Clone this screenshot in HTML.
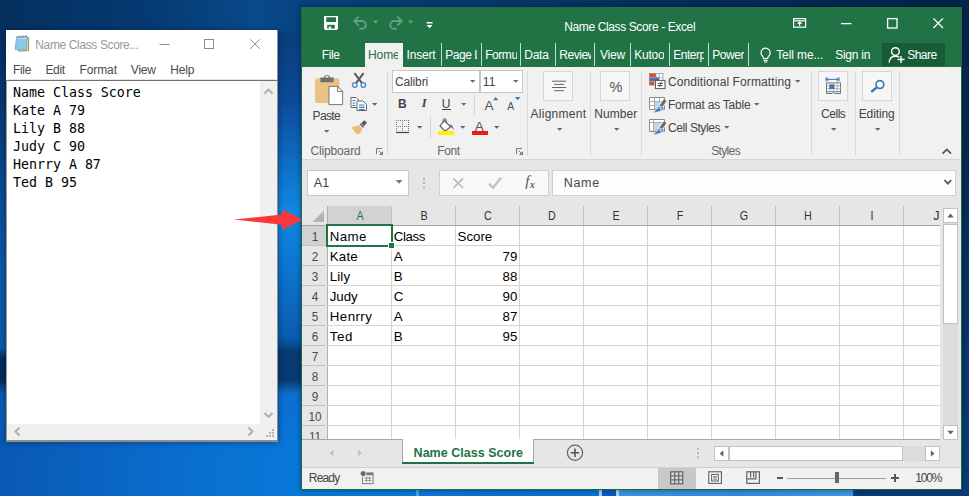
<!DOCTYPE html>
<html lang="en"><head><meta charset="utf-8"><title>Name Class Score</title>
<style>
html,body{margin:0;padding:0}
body{width:969px;height:496px;overflow:hidden;position:relative;background:#0b63c5;font-family:"Liberation Sans",sans-serif}
.r{position:absolute;box-sizing:border-box;display:block}
.t{position:absolute;white-space:pre;line-height:1;font-family:"Liberation Sans",sans-serif}
.m{position:absolute;white-space:pre;line-height:1;font-family:"DejaVu Sans Mono","Liberation Mono",monospace}
</style></head><body>
<!-- desktop -->
<div class="r" style="left:0px;top:0px;width:969px;height:496px;background:linear-gradient(180deg,#07407c 0px,#093f7c 40px,#0c4a98 100px,#0e6cc4 160px,#1088e0 210px,#0d78d4 260px,#0a5cae 338px,#063a70 352px,#063a70 380px,#0b70d0 394px,#0a74d6 440px,#0a74d6 496px);"></div>
<div class="r" style="left:0px;top:0px;width:969px;height:32px;background:linear-gradient(90deg,#04305f 0px,#053a72 150px,#094a8a 260px,#07407c 310px,#063868 500px,#052c58 700px,#042448 969px);"></div>
<div class="r" style="left:0px;top:30px;width:7px;height:466px;background:linear-gradient(180deg,#04305f 0px,#07386c 70px,#0a4a90 150px,#0b58a8 230px,#0b5aaa 318px,#052c58 328px,#052c58 350px,#0a5cb2 364px,#0959b4 466px);"></div>
<div class="r" style="left:0px;top:440px;width:969px;height:56px;background:linear-gradient(90deg,#0959b4 0px,#0a64c2 100px,#0a70d0 200px,#0878d8 290px,#0a72d4 500px,#0a6acc 840px,#0a3a76 856px,#0a3c7a 969px);"></div>
<div class="r" style="left:961px;top:0px;width:8px;height:496px;background:linear-gradient(180deg,#07244a 0px,#082b58 200px,#0a3670 380px,#0a3c7a 496px);"></div>
<div class="r" style="left:599px;top:489px;width:3px;height:7px;background:#9ccdf2;"></div>
<div class="r" style="left:602px;top:489px;width:14px;height:7px;background:#0a58b8;"></div>
<div class="r" style="left:616px;top:489px;width:3px;height:7px;background:#a8d4f4;"></div>
<div class="r" style="left:619px;top:489px;width:234px;height:7px;background:linear-gradient(90deg,#3a94e0,#2f8cdc 120px,#3a98e4 234px);"></div>
<div class="r" style="left:416px;top:489px;width:3px;height:7px;background:#4aa0e8;"></div>
<!-- notepad window -->
<div class="r" style="left:5px;top:29px;width:274px;height:413px;background:rgba(10,30,70,.28);box-shadow:0 1px 6px rgba(0,10,40,.35);"></div>
<div class="r" style="left:6px;top:30px;width:272px;height:412px;background:#8e8e8e;"></div>
<div class="r" style="left:6px;top:30px;width:271px;height:410px;background:#ffffff;"></div>
<svg class="r" style="left:14px;top:35px" width="17" height="18" viewBox="0 0 17 18">
<path d="M3.2 3.2 L14.6 2.6 L14.6 15.6 L4.6 16.2 Z" fill="#e4d898" stroke="#8c7c3c" stroke-width=".8"/>
<path d="M2.6 2.4 L13.2 1.8 L12.4 14.2 L1 14.6 Z" fill="#b6def4" stroke="#5aa4d0" stroke-width=".8"/>
<path d="M2.4 5h10.4M2.2 7h10.4M2 9h10.4M1.8 11h10.4M1.6 13h10.4" stroke="#6aaed8" stroke-width="1"/>
<path d="M3.2 2.6v-1.6M4.8 2.5v-1.6M6.4 2.4v-1.6M8 2.3v-1.6M9.6 2.2v-1.6M11.2 2.1v-1.6M12.6 2v-1.6" stroke="#555" stroke-width=".7"/>
</svg>
<span class="t" style="left:35.30px;top:39.44px;font-size:12px;color:#999;letter-spacing:-0.370px;">Name Class Score...</span>
<svg class="r" style="left:150px;top:30px" width="128" height="29" viewBox="0 0 128 29">
<path d="M9.5 14.5h10" stroke="#8c8c8c" stroke-width="1" fill="none"/>
<rect x="54.5" y="9.5" width="9" height="9" stroke="#8c8c8c" stroke-width="1" fill="none"/>
<path d="M100.3 9.3l9.6 9.6M109.9 9.3l-9.6 9.6" stroke="#8c8c8c" stroke-width="1" fill="none"/>
</svg>
<span class="t" style="left:13.00px;top:64.44px;font-size:12px;color:#4a4a4a;letter-spacing:-0.334px;">File</span>
<span class="t" style="left:45.40px;top:64.44px;font-size:12px;color:#4a4a4a;letter-spacing:-0.294px;">Edit</span>
<span class="t" style="left:79.40px;top:64.44px;font-size:12px;color:#4a4a4a;letter-spacing:-0.084px;">Format</span>
<span class="t" style="left:130.80px;top:64.44px;font-size:12px;color:#4a4a4a;letter-spacing:-0.198px;">View</span>
<span class="t" style="left:170.20px;top:64.44px;font-size:12px;color:#4a4a4a;letter-spacing:-0.170px;">Help</span>
<div class="r" style="left:7px;top:79px;width:270px;height:1px;background:#e4e4e4;"></div>
<div class="r" style="left:7px;top:80px;width:270px;height:1px;background:#707070;"></div>
<div class="r" style="left:6px;top:80px;width:1px;height:361px;background:#9a9a9a;"></div>
<div class="r" style="left:260px;top:81px;width:17px;height:343px;background:#f0f0f0;"></div>
<div class="r" style="left:7px;top:424px;width:270px;height:16px;background:#f0f0f0;"></div>
<svg class="r" style="left:260px;top:81px" width="17" height="343" viewBox="0 0 17 343">
<path d="M4.5 12.5l4-4 4 4" stroke="#adadad" stroke-width="1.9" fill="none"/>
<path d="M4.5 332l4 4 4-4" stroke="#adadad" stroke-width="1.9" fill="none"/>
</svg>
<svg class="r" style="left:7px;top:424px" width="270" height="16" viewBox="0 0 270 16">
<path d="M12.5 3.5l-4 4 4 4" stroke="#adadad" stroke-width="1.9" fill="none"/>
<path d="M241.5 3.5l4 4-4 4" stroke="#adadad" stroke-width="1.9" fill="none"/>
<g fill="#b4b4b4"><rect x="265" y="8" width="2" height="2"/><rect x="265" y="11" width="2" height="2"/><rect x="262" y="11" width="2" height="2"/><rect x="259" y="11" width="2" height="2"/><rect x="262" y="8" width="2" height="2"/><rect x="265" y="5" width="2" height="2"/></g>
</svg>
<span class="m" style="left:12.90px;top:85.74px;font-size:13.3px;color:#000;letter-spacing:-0.007px;">Name Class Score</span>
<span class="m" style="left:12.90px;top:103.74px;font-size:13.3px;color:#000;letter-spacing:-0.007px;">Kate A 79</span>
<span class="m" style="left:12.90px;top:121.74px;font-size:13.3px;color:#000;letter-spacing:-0.007px;">Lily B 88</span>
<span class="m" style="left:12.90px;top:139.74px;font-size:13.3px;color:#000;letter-spacing:-0.007px;">Judy C 90</span>
<span class="m" style="left:12.90px;top:157.74px;font-size:13.3px;color:#000;letter-spacing:-0.007px;">Henrry A 87</span>
<span class="m" style="left:12.90px;top:175.74px;font-size:13.3px;color:#000;letter-spacing:-0.007px;">Ted B 95</span>
<!-- excel window -->
<div class="r" style="left:301px;top:7px;width:661px;height:483px;background:#1e6a40;box-shadow:0 0 5px rgba(0,8,30,.45);"></div>
<div class="r" style="left:302px;top:7px;width:659px;height:60px;background:#217346;"></div>
<div class="r" style="left:302px;top:67px;width:659px;height:92px;background:#f1f1f1;"></div>
<div class="r" style="left:302px;top:159px;width:659px;height:1px;background:#d6d6d6;"></div>
<div class="r" style="left:302px;top:160px;width:659px;height:307px;background:#e6e6e6;"></div>
<svg class="r" style="left:320px;top:12px" width="120" height="22" viewBox="0 0 120 22">
<path d="M4 4h14v12.8l-1.2 1.2H5.2L4 16.8z" fill="#fff"/>
<path d="M6.2 5.3h9.9V10H6.2z" fill="#217346"/>
<path d="M7.2 12.8h7.6v3.8H7.2z" fill="#217346"/>
<path d="M8.7 14.6h2.5v2H8.7z" fill="#fff"/>
<g stroke="#5fa17e" stroke-width="2" fill="none" stroke-linecap="butt">
<path d="M34.4 9.1h7.6a3.8 3.8 0 0 1 0 7.6h-2.6"/>
<path d="M38.8 4.6l-4.6 4.5 4.6 4.5"/>
<path d="M81.6 9.1h-7.6a3.8 3.8 0 0 0 0 7.6h2.6"/>
<path d="M77.2 4.6l4.6 4.5-4.6 4.5"/>
</g>
<path d="M53 8.6h5.4l-2.7 3.2z" fill="#5fa17e"/>
<path d="M88 8.6h5.4l-2.7 3.2z" fill="#5fa17e"/>
<path d="M106.6 10h6v1.6h-6zM106.6 13h6l-3 3.2z" fill="#fff"/>
</svg>
<span class="t" style="left:564.20px;top:21.44px;font-size:12px;color:#fff;letter-spacing:-0.377px;">Name Class Score - Excel</span>
<svg class="r" style="left:790px;top:12px" width="160" height="22" viewBox="0 0 160 22">
<g stroke="#fff" fill="none" stroke-width="1.2">
<rect x="3.6" y="6.6" width="12" height="8.6"/>
<path d="M3.6 8.8h12"/>
<path d="M9.6 14v-4M7.6 11.8l2-2 2 2"/>
<path d="M51 11.6h10.4" stroke-width="1.3"/>
<rect x="97.6" y="6.6" width="9.4" height="9.4" stroke-width="1.3"/>
<path d="M143.4 6.4l9.6 9.6M153 6.4l-9.6 9.6" stroke-width="1.3"/>
</g>
</svg>
<div class="r" style="left:365px;top:43px;width:38px;height:25px;background:#f1f1f1;"></div>
<span class="t" style="left:321.70px;top:49.34px;font-size:12px;color:#fff;letter-spacing:-0.334px;">File</span>
<div class="r" style="left:368.00px;top:47.34px;width:29.8px;height:17px;overflow:hidden"><span class="t" style="left:0;top:2px;font-size:12px;color:#217346;letter-spacing:-0.1px;">Home</span></div>
<span class="t" style="left:406.50px;top:49.34px;font-size:12px;color:#fff;letter-spacing:-0.169px;">Insert</span>
<div class="r" style="left:445.20px;top:47.34px;width:32px;height:17px;overflow:hidden"><span class="t" style="left:0;top:2px;font-size:12px;color:#fff;letter-spacing:-0.45px;">Page Layout</span></div>
<div class="r" style="left:485.20px;top:47.34px;width:31.5px;height:17px;overflow:hidden"><span class="t" style="left:0;top:2px;font-size:12px;color:#fff;letter-spacing:-0.45px;">Formulas</span></div>
<span class="t" style="left:524.20px;top:49.34px;font-size:12px;color:#fff;letter-spacing:-0.212px;">Data</span>
<div class="r" style="left:559.20px;top:47.34px;width:31.5px;height:17px;overflow:hidden"><span class="t" style="left:0;top:2px;font-size:12px;color:#fff;letter-spacing:-0.45px;">Review</span></div>
<span class="t" style="left:600.00px;top:49.34px;font-size:12px;color:#fff;letter-spacing:-0.198px;">View</span>
<div class="r" style="left:634.20px;top:47.34px;width:30px;height:17px;overflow:hidden"><span class="t" style="left:0;top:2px;font-size:12px;color:#fff;letter-spacing:-0.2px;">Kutools &#8482;</span></div>
<div class="r" style="left:673.20px;top:47.34px;width:31px;height:17px;overflow:hidden"><span class="t" style="left:0;top:2px;font-size:12px;color:#fff;letter-spacing:-0.45px;">Enterprise</span></div>
<div class="r" style="left:712.20px;top:47.34px;width:32px;height:17px;overflow:hidden"><span class="t" style="left:0;top:2px;font-size:12px;color:#fff;letter-spacing:-0.45px;">Power Pivot</span></div>
<div class="r" style="left:441px;top:43px;width:1px;height:23px;background:rgba(255,255,255,.75);"></div>
<div class="r" style="left:481px;top:43px;width:1px;height:23px;background:rgba(255,255,255,.75);"></div>
<div class="r" style="left:520px;top:43px;width:1px;height:23px;background:rgba(255,255,255,.75);"></div>
<div class="r" style="left:555px;top:43px;width:1px;height:23px;background:rgba(255,255,255,.75);"></div>
<div class="r" style="left:594px;top:43px;width:1px;height:23px;background:rgba(255,255,255,.75);"></div>
<div class="r" style="left:630px;top:43px;width:1px;height:23px;background:rgba(255,255,255,.75);"></div>
<div class="r" style="left:669px;top:43px;width:1px;height:23px;background:rgba(255,255,255,.75);"></div>
<div class="r" style="left:708px;top:43px;width:1px;height:23px;background:rgba(255,255,255,.75);"></div>
<div class="r" style="left:748px;top:43px;width:1px;height:23px;background:rgba(255,255,255,.75);"></div>
<svg class="r" style="left:758px;top:45px" width="16" height="18" viewBox="0 0 16 18">
<path d="M4.6 11.2a4.6 4.6 0 1 1 6 0c-.7.7-.9 1.3-.9 2.3H5.5c0-1-.2-1.6-.9-2.3z" fill="none" stroke="#fff" stroke-width="1.2"/>
<path d="M5.6 15.4h4M6 17h3.2" stroke="#fff" stroke-width="1.1"/>
</svg>
<span class="t" style="left:776.20px;top:49.34px;font-size:12px;color:#fff;letter-spacing:-0.101px;">Tell me...</span>
<span class="t" style="left:835.20px;top:49.34px;font-size:12px;color:#fff;letter-spacing:-0.242px;">Sign in</span>
<div class="r" style="left:882px;top:43px;width:63px;height:23px;background:#185c37;"></div>
<svg class="r" style="left:887px;top:45px" width="20" height="20" viewBox="0 0 20 20">
<circle cx="8.4" cy="6.6" r="3.9" fill="none" stroke="#fff" stroke-width="1.4"/>
<path d="M2 17.5c.4-4.2 2.6-6.3 6.4-6.3 1.6 0 2.8.3 3.8.9" fill="none" stroke="#fff" stroke-width="1.4"/>
<path d="M14 11v7M10.5 14.5h7" stroke="#fff" stroke-width="1.4"/>
</svg>
<span class="t" style="left:907.20px;top:49.34px;font-size:12px;color:#fff;letter-spacing:-0.504px;">Share</span>
<div class="r" style="left:387px;top:71px;width:1px;height:85px;background:#dadada;"></div>
<div class="r" style="left:527px;top:71px;width:1px;height:85px;background:#dadada;"></div>
<div class="r" style="left:590px;top:71px;width:1px;height:85px;background:#dadada;"></div>
<div class="r" style="left:641px;top:71px;width:1px;height:85px;background:#dadada;"></div>
<div class="r" style="left:811px;top:71px;width:1px;height:85px;background:#dadada;"></div>
<div class="r" style="left:855px;top:71px;width:1px;height:85px;background:#dadada;"></div>
<div class="r" style="left:899px;top:71px;width:1px;height:85px;background:#dadada;"></div>
<svg class="r" style="left:312px;top:72px" width="36" height="36" viewBox="0 0 36 36">
<rect x="3" y="6.2" width="24.4" height="24.8" rx="2" fill="#eac282"/>
<path d="M8.4 10.2V5.6h3.4a3.3 3.3 0 0 1 6.4 0h3.4v4.6z" fill="#6e6e6e"/>
<rect x="13.5" y="3.8" width="3" height="1.8" fill="#f1f1f1"/>
<path d="M17 14.4h8.6l5 5V32.6H17z" fill="#fff" stroke="#777" stroke-width="1"/>
<path d="M25.6 14.4v5h5" fill="none" stroke="#777" stroke-width="1"/>
</svg>
<span class="t" style="left:312.50px;top:110.34px;font-size:12px;color:#444;letter-spacing:-0.617px;">Paste</span>
<svg class="r" style="left:323.6px;top:130.4px" width="8" height="5" viewBox="0 0 8 5"><path d="M0 0h5.4l-2.7 2.8z" fill="#666"/></svg>
<svg class="r" style="left:350px;top:72px" width="18" height="17" viewBox="0 0 18 17">
<path d="M4.4 1.2l8 10.4M13.6 1.2l-8 10.4" stroke="#5a5a5a" stroke-width="2" fill="none"/>
<circle cx="4.7" cy="13" r="2.3" fill="#f1f1f1" stroke="#4583c2" stroke-width="1.3"/>
<circle cx="13.3" cy="13" r="2.3" fill="#f1f1f1" stroke="#4583c2" stroke-width="1.3"/>
</svg>
<svg class="r" style="left:349px;top:96px" width="20" height="16" viewBox="0 0 20 16">
<path d="M2 1.5h5l2.5 2.5v7.5H2z" fill="#fff" stroke="#6a6a6a" stroke-width="1"/>
<path d="M3.4 4.5h3M3.4 7h3M3.4 9.5h3" stroke="#3b78b8" stroke-width="1.1"/>
<path d="M8 5h6l3.5 3.5v6H8z" fill="#fff" stroke="#6a6a6a" stroke-width="1"/>
<path d="M10 9h5.6M10 11.4h5.6M10 13.6h5.6" stroke="#3b78b8" stroke-width="1.1"/>
</svg>
<svg class="r" style="left:372.4px;top:103.3px" width="8" height="5" viewBox="0 0 8 5"><path d="M0 0h5.4l-2.7 2.8z" fill="#666"/></svg>
<svg class="r" style="left:350px;top:119px" width="19" height="16" viewBox="0 0 19 16">
<path d="M11.2 4.2l3.2-3 2.6 2.6-3 3.2z" fill="#555"/>
<path d="M9.4 5.4l1.6-1.4 3.4 3.4-1.4 1.6z" fill="#777"/>
<path d="M8.8 6.2l3.6 3.6-2.4 5H6L1.4 8.2z" fill="#e8bd7a"/>
</svg>
<span class="t" style="left:310.50px;top:145.34px;font-size:12px;color:#666;letter-spacing:-0.152px;">Clipboard</span>
<svg class="r" style="left:376px;top:148px" width="8" height="8" viewBox="0 0 8 8"><path d="M.5 6V.5H6" fill="none" stroke="#777" stroke-width="1"/><path d="M2.6 2.6l3.6 3.6" stroke="#777" stroke-width="1"/><path d="M7 3v4H3z" fill="#777"/></svg>
<div class="r" style="left:392px;top:70px;width:88px;height:23px;background:#fff;border:1px solid #c6c6c6;"></div>
<div class="r" style="left:480px;top:70px;width:43px;height:23px;background:#fff;border:1px solid #c6c6c6;"></div>
<span class="t" style="left:395.00px;top:75.84px;font-size:12px;color:#444;letter-spacing:-0.144px;">Calibri</span>
<span class="t" style="left:482.80px;top:75.84px;font-size:12px;color:#444;letter-spacing:0.071px;">11</span>
<svg class="r" style="left:469.8px;top:80.2px" width="8" height="5" viewBox="0 0 8 5"><path d="M0 0h5.4l-2.7 2.8z" fill="#666"/></svg>
<svg class="r" style="left:512.6px;top:80.2px" width="8" height="5" viewBox="0 0 8 5"><path d="M0 0h5.4l-2.7 2.8z" fill="#666"/></svg>
<span class="t" style="left:398.00px;top:97.84px;font-size:12px;color:#444;font-weight:700;letter-spacing:-0.666px;">B</span>
<span class="t" style="left:421.70px;top:97.42px;font-size:12.5px;color:#444;letter-spacing:1.027px;font-family:'Liberation Serif',serif;font-style:italic;font-weight:700;">I</span>
<span class="t" style="left:441.80px;top:97.84px;font-size:12px;color:#444;letter-spacing:-0.266px;">U</span>
<div class="r" style="left:442px;top:109px;width:9.4px;height:1px;background:#444;"></div>
<svg class="r" style="left:460.8px;top:103.3px" width="8" height="5" viewBox="0 0 8 5"><path d="M0 0h5.4l-2.7 2.8z" fill="#666"/></svg>
<div class="r" style="left:474px;top:94px;width:1px;height:21px;background:#d4d4d4;"></div>
<span class="t" style="left:484.40px;top:98.57px;font-size:13.5px;color:#555;letter-spacing:0.995px;">A</span>
<svg class="r" style="left:492.6px;top:96.6px" width="6" height="4" viewBox="0 0 6 4"><path d="M0 3.2L2.7 0l2.7 3.2z" fill="#3b78b8"/></svg>
<span class="t" style="left:507.20px;top:101.11px;font-size:10.5px;color:#555;letter-spacing:1.196px;">A</span>
<svg class="r" style="left:514.8px;top:96.6px" width="6" height="4" viewBox="0 0 6 4"><path d="M0 0h5.4L2.7 3.2z" fill="#3b78b8"/></svg>
<svg class="r" style="left:395px;top:119px" width="15" height="15" viewBox="0 0 15 15">
<g stroke="#777" stroke-width="1" stroke-dasharray="1 1" fill="none">
<path d="M1 1.5h13M1 7.5h13M1.5 1v12M7.5 1v12M13.5 1v12"/></g>
<path d="M1 13.5h13" stroke="#444" stroke-width="1.2"/>
</svg>
<svg class="r" style="left:416.8px;top:126px" width="8" height="5" viewBox="0 0 8 5"><path d="M0 0h5.4l-2.7 2.8z" fill="#666"/></svg>
<div class="r" style="left:430px;top:116px;width:1px;height:22px;background:#d4d4d4;"></div>
<svg class="r" style="left:437px;top:117px" width="19" height="19" viewBox="0 0 19 19">
<path d="M7.4 3.6l6.2 6.2-5.4 4.4L3 9z" fill="#fff" stroke="#555" stroke-width="1.1"/>
<path d="M6.2 5.4V3.2a1.5 1.5 0 0 1 3 0V6" fill="none" stroke="#555" stroke-width="1"/>
<path d="M13.4 7.4c2 .8 3.6 3 3.2 5.6-1-1.6-2.2-2.8-3.8-3.4z" fill="#3b78b8"/>
<rect x="1" y="14" width="16" height="4" fill="#ffef00"/>
</svg>
<svg class="r" style="left:460px;top:126px" width="8" height="5" viewBox="0 0 8 5"><path d="M0 0h5.4l-2.7 2.8z" fill="#666"/></svg>
<span class="t" style="left:474.80px;top:119.57px;font-size:13.5px;color:#555;letter-spacing:1.396px;">A</span>
<div class="r" style="left:472px;top:131px;width:16px;height:4px;background:#f01818;"></div>
<svg class="r" style="left:494px;top:126px" width="8" height="5" viewBox="0 0 8 5"><path d="M0 0h5.4l-2.7 2.8z" fill="#666"/></svg>
<span class="t" style="left:437.20px;top:145.34px;font-size:12px;color:#666;letter-spacing:-0.378px;">Font</span>
<svg class="r" style="left:516px;top:148px" width="8" height="8" viewBox="0 0 8 8"><path d="M.5 6V.5H6" fill="none" stroke="#777" stroke-width="1"/><path d="M2.6 2.6l3.6 3.6" stroke="#777" stroke-width="1"/><path d="M7 3v4H3z" fill="#777"/></svg>
<div class="r" style="left:543px;top:71px;width:30px;height:30px;background:#f6f6f6;border:1px solid #d6d6d6;"></div>
<svg class="r" style="left:550px;top:79px" width="18" height="14" viewBox="0 0 18 14"><path d="M2 2.2h14.2M4.2 5.4h9.8M2 8.5h14.2M4.2 11.7h9.8" stroke="#666" stroke-width="1"/></svg>
<span class="t" style="left:530.50px;top:108.34px;font-size:12px;color:#444;letter-spacing:0.271px;">Alignment</span>
<svg class="r" style="left:556.8px;top:128.4px" width="8" height="5" viewBox="0 0 8 5"><path d="M0 0h5.4l-2.7 2.8z" fill="#666"/></svg>
<div class="r" style="left:600px;top:71px;width:30px;height:30px;background:#f6f6f6;border:1px solid #d6d6d6;"></div>
<span class="t" style="left:609.60px;top:80.33px;font-size:14.5px;color:#555;letter-spacing:-0.293px;">%</span>
<span class="t" style="left:594.20px;top:108.34px;font-size:12px;color:#444;letter-spacing:0.053px;">Number</span>
<svg class="r" style="left:613.8px;top:128.4px" width="8" height="5" viewBox="0 0 8 5"><path d="M0 0h5.4l-2.7 2.8z" fill="#666"/></svg>
<svg class="r" style="left:648px;top:72px" width="19" height="18" viewBox="0 0 19 18">
<rect x="1.5" y="1.5" width="13.4" height="11.6" fill="#fff" stroke="#999" stroke-width=".8"/>
<path d="M1.5 5.3h13.4M1.5 9.2h13.4M8 1.5v11.6M11.4 1.5v11.6" stroke="#aaa" stroke-width=".7"/>
<rect x="1.5" y="1.5" width="6.4" height="3.6" fill="#dc4b32"/>
<rect x="1.5" y="5.5" width="9.6" height="3.5" fill="#3f74b8"/>
<rect x="1.5" y="9.5" width="4.8" height="3.5" fill="#dc4b32"/>
<rect x="7.4" y="8.4" width="9.6" height="8.2" fill="#fff" stroke="#555" stroke-width="1"/>
<path d="M9.6 11.4h5.2M9.6 13.6h5.2M13.6 10l-2.6 5" stroke="#444" stroke-width=".9" fill="none"/>
</svg>
<svg class="r" style="left:648px;top:95.5px" width="19" height="17" viewBox="0 0 19 17"><path d="M1.5 1.5h15v12h-15z" fill="#fff" stroke="#888" stroke-width="1"/><path d="M1.5 5.5h15M1.5 9.5h15M6.5 1.5v12M11.5 1.5v12" stroke="#999" stroke-width=".8"/><rect x="7" y="6" width="7.6" height="7" fill="#bcd6ec"/><path d="M17 4.4L12.6 10.4" stroke="#f1f1f1" stroke-width="5"/><path d="M17.2 4.2L12.8 10.4" stroke="#6a6a6a" stroke-width="3.1"/><path d="M15.4 10.6Q16.6 13.4 12 15.2Q8 16.7 4.8 16.4Q8.4 14.4 9.6 12Q11.2 9.4 15.4 10.6z" fill="#3b78b8" stroke="#f1f1f1" stroke-width=".6"/><circle cx="12.6" cy="12.4" r="1.1" fill="#dbe8f5"/></svg>
<svg class="r" style="left:648px;top:118px" width="19" height="17" viewBox="0 0 19 17"><path d="M1.5 1.5h15v12h-15z" fill="#fff" stroke="#888" stroke-width="1"/><path d="M1.5 4.5h15M5.5 1.5v12" stroke="#999" stroke-width=".8"/><rect x="6" y="5" width="9" height="8" fill="#bcd6ec"/><path d="M17 4.4L12.6 10.4" stroke="#f1f1f1" stroke-width="5"/><path d="M17.2 4.2L12.8 10.4" stroke="#6a6a6a" stroke-width="3.1"/><path d="M15.4 10.6Q16.6 13.4 12 15.2Q8 16.7 4.8 16.4Q8.4 14.4 9.6 12Q11.2 9.4 15.4 10.6z" fill="#3b78b8" stroke="#f1f1f1" stroke-width=".6"/><circle cx="12.6" cy="12.4" r="1.1" fill="#dbe8f5"/></svg>
<span class="t" style="left:668.00px;top:76.14px;font-size:12px;color:#444;letter-spacing:0.103px;">Conditional Formatting</span>
<svg class="r" style="left:795.4px;top:80.4px" width="8" height="5" viewBox="0 0 8 5"><path d="M0 0h5.4l-2.7 2.8z" fill="#666"/></svg>
<span class="t" style="left:668.00px;top:98.84px;font-size:12px;color:#444;letter-spacing:-0.228px;">Format as Table</span>
<svg class="r" style="left:754.2px;top:103.3px" width="8" height="5" viewBox="0 0 8 5"><path d="M0 0h5.4l-2.7 2.8z" fill="#666"/></svg>
<span class="t" style="left:668.00px;top:121.84px;font-size:12px;color:#444;letter-spacing:-0.426px;">Cell Styles</span>
<svg class="r" style="left:724.2px;top:126px" width="8" height="5" viewBox="0 0 8 5"><path d="M0 0h5.4l-2.7 2.8z" fill="#666"/></svg>
<span class="t" style="left:711.20px;top:145.34px;font-size:12px;color:#666;letter-spacing:-0.646px;">Styles</span>
<div class="r" style="left:818px;top:71px;width:30px;height:30px;background:#f6f6f6;border:1px solid #d6d6d6;"></div>
<svg class="r" style="left:824px;top:76px" width="20" height="20" viewBox="0 0 20 20">
<path d="M2 3.4h13" stroke="#3b78b8" stroke-width="1"/>
<path d="M2 1.2v4.4M15 1.2v4.4" stroke="#3b78b8" stroke-width="1"/>
<path d="M4.6 1.6L2.6 3.4l2 1.8M12.4 1.6l2 1.8-2 1.8" stroke="#3b78b8" stroke-width="1" fill="none"/>
<rect x="2.5" y="6.9" width="14" height="8.8" fill="#fff" stroke="#777" stroke-width="1"/>
<path d="M2.5 9.8h14M2.5 12.7h14M6 6.9v8.8M9.6 6.9v8.8M13.2 6.9v8.8" stroke="#999" stroke-width=".8"/>
<rect x="5.4" y="8.4" width="5" height="4.6" fill="#3b78b8"/>
<path d="M2.5 15.7v1.8h5.6l1.4-1 1.4 1h5.6v-1.8" fill="none" stroke="#777" stroke-width="1"/>
</svg>
<span class="t" style="left:821.00px;top:108.34px;font-size:12px;color:#444;letter-spacing:-0.454px;">Cells</span>
<svg class="r" style="left:830.8px;top:128.4px" width="8" height="5" viewBox="0 0 8 5"><path d="M0 0h5.4l-2.7 2.8z" fill="#666"/></svg>
<div class="r" style="left:862px;top:71px;width:30px;height:30px;background:#f6f6f6;border:1px solid #d6d6d6;"></div>
<svg class="r" style="left:868px;top:77px" width="18" height="18" viewBox="0 0 18 18">
<circle cx="11.9" cy="7.6" r="3.9" fill="#fff" stroke="#3b78b8" stroke-width="1.7"/>
<path d="M8.8 10.4L4 14.2" stroke="#3b78b8" stroke-width="2.4" stroke-linecap="round"/>
</svg>
<span class="t" style="left:858.70px;top:108.34px;font-size:12px;color:#444;letter-spacing:-0.099px;">Editing</span>
<svg class="r" style="left:875px;top:128.4px" width="8" height="5" viewBox="0 0 8 5"><path d="M0 0h5.4l-2.7 2.8z" fill="#666"/></svg>
<svg class="r" style="left:940px;top:146px" width="14" height="10" viewBox="0 0 14 10"><path d="M2.6 7.6l4.2-4.2 4.2 4.2" fill="none" stroke="#555" stroke-width="1.7"/></svg>
<!-- formula bar -->
<div class="r" style="left:307px;top:170px;width:102px;height:26px;background:#fff;border:1px solid #c8c8c8;"></div>
<span class="t" style="left:313.80px;top:177.42px;font-size:12.5px;color:#444;letter-spacing:0.055px;">A1</span>
<svg class="r" style="left:394px;top:178px" width="10" height="8" viewBox="0 0 10 8"><path d="M1.6 2h7l-3.5 3.8z" fill="#777"/></svg>
<svg class="r" style="left:421px;top:176px" width="6" height="14" viewBox="0 0 6 14"><g fill="#b4b4b4"><rect x="2" y="1.6" width="2" height="2"/><rect x="2" y="6" width="2" height="2"/><rect x="2" y="10.4" width="2" height="2"/></g></svg>
<div class="r" style="left:439px;top:170px;width:110px;height:26px;background:#f8f8f8;border:1px solid #d0d0d0;"></div>
<svg class="r" style="left:450px;top:175px" width="90" height="16" viewBox="0 0 90 16">
<path d="M3.4 3.4l9.6 9.6M13 3.4L3.4 13" stroke="#b9b9b9" stroke-width="1.7" fill="none"/>
<path d="M39 8.6l4 4.2 8-10" stroke="#c2c2c2" stroke-width="2.4" fill="none"/>
</svg>
<span class="t" style="left:525.20px;top:174.30px;font-size:15px;color:#555;font-family:'Liberation Serif',serif;font-style:italic;">f</span>
<span class="t" style="left:530.00px;top:180.56px;font-size:9.5px;color:#555;font-family:'Liberation Serif',serif;font-style:italic;font-weight:700;">x</span>
<div class="r" style="left:552px;top:170px;width:404px;height:26px;background:#fdfdfd;border:1px solid #d0d0d0;"></div>
<span class="t" style="left:563.80px;top:177.42px;font-size:12.5px;color:#444;letter-spacing:0.664px;">Name</span>
<svg class="r" style="left:942px;top:177px" width="12" height="10" viewBox="0 0 12 10"><path d="M2.4 3l3.4 3.6L9.2 3" fill="none" stroke="#555" stroke-width="1.8"/></svg>
<!-- sheet -->
<div class="r" style="left:327px;top:225px;width:613px;height:214px;background:#fff;"></div>
<div class="r" style="left:327px;top:206px;width:65px;height:19px;background:#d2d2d2;"></div>
<div class="r" style="left:302px;top:225px;width:25px;height:21px;background:#d2d2d2;"></div>
<svg class="r" style="left:311px;top:209px" width="14" height="14" viewBox="0 0 14 14"><path d="M13 1.4V13H1.4z" fill="#b4b4b4"/></svg>
<span class="t" style="left:309.80px;width:100px;text-align:center;top:209.82px;font-size:12.5px;color:#217346;transform:scaleX(.86);">A</span>
<div class="r" style="left:391px;top:206px;width:1px;height:19px;background:#c2c2c2;"></div>
<span class="t" style="left:373.80px;width:100px;text-align:center;top:209.82px;font-size:12.5px;color:#333;transform:scaleX(.86);">B</span>
<div class="r" style="left:455px;top:206px;width:1px;height:19px;background:#c2c2c2;"></div>
<span class="t" style="left:437.80px;width:100px;text-align:center;top:209.82px;font-size:12.5px;color:#333;transform:scaleX(.86);">C</span>
<div class="r" style="left:519px;top:206px;width:1px;height:19px;background:#c2c2c2;"></div>
<span class="t" style="left:501.80px;width:100px;text-align:center;top:209.82px;font-size:12.5px;color:#333;transform:scaleX(.86);">D</span>
<div class="r" style="left:583px;top:206px;width:1px;height:19px;background:#c2c2c2;"></div>
<span class="t" style="left:565.80px;width:100px;text-align:center;top:209.82px;font-size:12.5px;color:#333;transform:scaleX(.86);">E</span>
<div class="r" style="left:647px;top:206px;width:1px;height:19px;background:#c2c2c2;"></div>
<span class="t" style="left:629.80px;width:100px;text-align:center;top:209.82px;font-size:12.5px;color:#333;transform:scaleX(.86);">F</span>
<div class="r" style="left:711px;top:206px;width:1px;height:19px;background:#c2c2c2;"></div>
<span class="t" style="left:693.80px;width:100px;text-align:center;top:209.82px;font-size:12.5px;color:#333;transform:scaleX(.86);">G</span>
<div class="r" style="left:775px;top:206px;width:1px;height:19px;background:#c2c2c2;"></div>
<span class="t" style="left:757.80px;width:100px;text-align:center;top:209.82px;font-size:12.5px;color:#333;transform:scaleX(.86);">H</span>
<div class="r" style="left:839px;top:206px;width:1px;height:19px;background:#c2c2c2;"></div>
<span class="t" style="left:821.80px;width:100px;text-align:center;top:209.82px;font-size:12.5px;color:#333;transform:scaleX(.86);">I</span>
<div class="r" style="left:903px;top:206px;width:1px;height:19px;background:#c2c2c2;"></div>
<span class="t" style="left:933.20px;top:209.82px;font-size:12.5px;color:#333;">J</span>
<div class="r" style="left:302px;top:225px;width:638px;height:1px;background:#a6a6a6;"></div>
<div class="r" style="left:327px;top:206px;width:1px;height:233px;background:#b0b0b0;"></div>
<div class="r" style="left:391px;top:226px;width:1px;height:213px;background:#d4d4d4;"></div>
<div class="r" style="left:455px;top:226px;width:1px;height:213px;background:#d4d4d4;"></div>
<div class="r" style="left:519px;top:226px;width:1px;height:213px;background:#d4d4d4;"></div>
<div class="r" style="left:583px;top:226px;width:1px;height:213px;background:#d4d4d4;"></div>
<div class="r" style="left:647px;top:226px;width:1px;height:213px;background:#d4d4d4;"></div>
<div class="r" style="left:711px;top:226px;width:1px;height:213px;background:#d4d4d4;"></div>
<div class="r" style="left:775px;top:226px;width:1px;height:213px;background:#d4d4d4;"></div>
<div class="r" style="left:839px;top:226px;width:1px;height:213px;background:#d4d4d4;"></div>
<div class="r" style="left:903px;top:226px;width:1px;height:213px;background:#d4d4d4;"></div>
<div class="r" style="left:327px;top:245px;width:613px;height:1px;background:#d4d4d4;"></div>
<div class="r" style="left:302px;top:245px;width:24px;height:1px;background:#c2c2c2;"></div>
<span class="t" style="left:265.20px;width:100px;text-align:center;top:230.62px;font-size:12.5px;color:#4a4a4a;transform:scaleX(.94);">1</span>
<div class="r" style="left:327px;top:265px;width:613px;height:1px;background:#d4d4d4;"></div>
<div class="r" style="left:302px;top:265px;width:24px;height:1px;background:#c2c2c2;"></div>
<span class="t" style="left:265.20px;width:100px;text-align:center;top:250.62px;font-size:12.5px;color:#4a4a4a;transform:scaleX(.94);">2</span>
<div class="r" style="left:327px;top:285px;width:613px;height:1px;background:#d4d4d4;"></div>
<div class="r" style="left:302px;top:285px;width:24px;height:1px;background:#c2c2c2;"></div>
<span class="t" style="left:265.20px;width:100px;text-align:center;top:270.62px;font-size:12.5px;color:#4a4a4a;transform:scaleX(.94);">3</span>
<div class="r" style="left:327px;top:305px;width:613px;height:1px;background:#d4d4d4;"></div>
<div class="r" style="left:302px;top:305px;width:24px;height:1px;background:#c2c2c2;"></div>
<span class="t" style="left:265.20px;width:100px;text-align:center;top:290.62px;font-size:12.5px;color:#4a4a4a;transform:scaleX(.94);">4</span>
<div class="r" style="left:327px;top:325px;width:613px;height:1px;background:#d4d4d4;"></div>
<div class="r" style="left:302px;top:325px;width:24px;height:1px;background:#c2c2c2;"></div>
<span class="t" style="left:265.20px;width:100px;text-align:center;top:310.62px;font-size:12.5px;color:#4a4a4a;transform:scaleX(.94);">5</span>
<div class="r" style="left:327px;top:345px;width:613px;height:1px;background:#d4d4d4;"></div>
<div class="r" style="left:302px;top:345px;width:24px;height:1px;background:#c2c2c2;"></div>
<span class="t" style="left:265.20px;width:100px;text-align:center;top:330.62px;font-size:12.5px;color:#4a4a4a;transform:scaleX(.94);">6</span>
<div class="r" style="left:327px;top:365px;width:613px;height:1px;background:#d4d4d4;"></div>
<div class="r" style="left:302px;top:365px;width:24px;height:1px;background:#c2c2c2;"></div>
<span class="t" style="left:265.20px;width:100px;text-align:center;top:350.62px;font-size:12.5px;color:#4a4a4a;transform:scaleX(.94);">7</span>
<div class="r" style="left:327px;top:385px;width:613px;height:1px;background:#d4d4d4;"></div>
<div class="r" style="left:302px;top:385px;width:24px;height:1px;background:#c2c2c2;"></div>
<span class="t" style="left:265.20px;width:100px;text-align:center;top:370.62px;font-size:12.5px;color:#4a4a4a;transform:scaleX(.94);">8</span>
<div class="r" style="left:327px;top:405px;width:613px;height:1px;background:#d4d4d4;"></div>
<div class="r" style="left:302px;top:405px;width:24px;height:1px;background:#c2c2c2;"></div>
<span class="t" style="left:265.20px;width:100px;text-align:center;top:390.62px;font-size:12.5px;color:#4a4a4a;transform:scaleX(.94);">9</span>
<div class="r" style="left:327px;top:425px;width:613px;height:1px;background:#d4d4d4;"></div>
<div class="r" style="left:302px;top:425px;width:24px;height:1px;background:#c2c2c2;"></div>
<span class="t" style="left:265.20px;width:100px;text-align:center;top:410.62px;font-size:12.5px;color:#4a4a4a;transform:scaleX(.94);">10</span>
<div class="r" style="left:302px;top:425px;width:24px;height:14px;overflow:hidden"><span class="t" style="left:-36.80px;width:100px;text-align:center;top:5.62px;font-size:12.5px;color:#4a4a4a;transform:scaleX(.94);">11</span></div>
<span class="t" style="left:329.80px;top:230.14px;font-size:13.3px;color:#000;letter-spacing:0.381px;">Name</span>
<span class="t" style="left:393.80px;top:230.14px;font-size:13.3px;color:#000;letter-spacing:-0.411px;">Class</span>
<span class="t" style="left:457.60px;top:230.14px;font-size:13.3px;color:#000;letter-spacing:-0.029px;">Score</span>
<span class="t" style="left:329.80px;top:250.14px;font-size:13.3px;color:#000;letter-spacing:0.160px;">Kate</span>
<span class="t" style="left:393.80px;top:250.14px;font-size:13.3px;color:#000;letter-spacing:-0.371px;">A</span>
<span class="t" style="right:451.60px;top:250.14px;font-size:13.3px;color:#000;">79</span>
<span class="t" style="left:329.80px;top:270.14px;font-size:13.3px;color:#000;letter-spacing:0.111px;">Lily</span>
<span class="t" style="left:393.80px;top:270.14px;font-size:13.3px;color:#000;letter-spacing:-0.871px;">B</span>
<span class="t" style="right:451.60px;top:270.14px;font-size:13.3px;color:#000;">88</span>
<span class="t" style="left:329.80px;top:290.14px;font-size:13.3px;color:#000;letter-spacing:-0.073px;">Judy</span>
<span class="t" style="left:393.80px;top:290.14px;font-size:13.3px;color:#000;letter-spacing:-1.805px;">C</span>
<span class="t" style="right:451.60px;top:290.14px;font-size:13.3px;color:#000;">90</span>
<span class="t" style="left:329.80px;top:310.14px;font-size:13.3px;color:#000;letter-spacing:0.416px;">Henrry</span>
<span class="t" style="left:393.80px;top:310.14px;font-size:13.3px;color:#000;letter-spacing:-0.371px;">A</span>
<span class="t" style="right:451.60px;top:310.14px;font-size:13.3px;color:#000;">87</span>
<span class="t" style="left:329.80px;top:330.14px;font-size:13.3px;color:#000;letter-spacing:0.585px;">Ted</span>
<span class="t" style="left:393.80px;top:330.14px;font-size:13.3px;color:#000;letter-spacing:-0.871px;">B</span>
<span class="t" style="right:451.60px;top:330.14px;font-size:13.3px;color:#000;">95</span>
<div class="r" style="left:326px;top:224px;width:67px;height:23px;border:2px solid #217346;"></div>
<div class="r" style="left:388px;top:242px;width:7px;height:7px;background:#217346;border:1px solid #fff;"></div>
<div class="r" style="left:327px;top:224px;width:65px;height:2px;background:#217346;"></div>
<div class="r" style="left:940px;top:206px;width:1px;height:234px;background:#e6e6e6;"></div>
<div class="r" style="left:302px;top:439px;width:638px;height:1px;background:#a6a6a6;"></div>
<!-- vertical scrollbar -->
<div class="r" style="left:943px;top:208px;width:15px;height:231px;background:#dcdcdc;"></div>
<div class="r" style="left:943px;top:208px;width:15px;height:15px;background:#fff;border:1px solid #c2c2c2;"></div>
<svg class="r" style="left:943px;top:208px" width="15" height="15" viewBox="0 0 15 15"><path d="M4.2 9.4h6.6L7.5 5.6z" fill="#666"/></svg>
<div class="r" style="left:943px;top:224px;width:15px;height:100px;background:#fff;border:1px solid #c2c2c2;"></div>
<div class="r" style="left:943px;top:425px;width:15px;height:15px;background:#fff;border:1px solid #c2c2c2;"></div>
<svg class="r" style="left:943px;top:425px" width="15" height="15" viewBox="0 0 15 15"><path d="M4.2 5.8h6.6L7.5 9.6z" fill="#666"/></svg>
<!-- sheet tabs row -->
<svg class="r" style="left:327px;top:446px" width="40" height="14" viewBox="0 0 40 14"><path d="M6.4 3.6v6.6L2.6 6.9zM31 3.6v6.6l3.8-3.3z" fill="#c0c0c0"/></svg>
<div class="r" style="left:402px;top:439px;width:132px;height:25px;background:#fff;border-left:1px solid #a6a6a6;border-right:1px solid #a6a6a6;"></div>
<div class="r" style="left:402px;top:462px;width:132px;height:2px;background:#217346;"></div>
<span class="t" style="left:413.60px;top:447.22px;font-size:12.5px;color:#217346;font-weight:700;letter-spacing:0.019px;">Name Class Score</span>
<svg class="r" style="left:565px;top:443px" width="20" height="20" viewBox="0 0 20 20"><circle cx="10" cy="9.8" r="7.6" fill="none" stroke="#666" stroke-width="1.2"/><path d="M10 5.6v8.4M5.8 9.8h8.4" stroke="#555" stroke-width="1.6"/></svg>
<svg class="r" style="left:695px;top:446px" width="6" height="14" viewBox="0 0 6 14"><g fill="#b4b4b4"><rect x="2" y="1.6" width="2" height="2"/><rect x="2" y="6" width="2" height="2"/><rect x="2" y="10.4" width="2" height="2"/></g></svg>
<div class="r" style="left:714px;top:446px;width:226px;height:15px;background:#dcdcdc;"></div>
<div class="r" style="left:714px;top:446px;width:15px;height:15px;background:#fff;border:1px solid #c2c2c2;"></div>
<svg class="r" style="left:714px;top:446px" width="15" height="15" viewBox="0 0 15 15"><path d="M9.4 4.2v6.6L5.6 7.5z" fill="#666"/></svg>
<div class="r" style="left:729px;top:446px;width:174px;height:15px;background:#fff;border:1px solid #c2c2c2;"></div>
<div class="r" style="left:925px;top:446px;width:15px;height:15px;background:#fff;border:1px solid #c2c2c2;"></div>
<svg class="r" style="left:925px;top:446px" width="15" height="15" viewBox="0 0 15 15"><path d="M5.8 4.2v6.6l3.8-3.3z" fill="#666"/></svg>
<!-- status bar -->
<div class="r" style="left:302px;top:467px;width:659px;height:22px;background:#f1f1f1;"></div>
<div class="r" style="left:302px;top:467px;width:659px;height:1px;background:#d0d0d0;"></div>
<span class="t" style="left:308.80px;top:472.24px;font-size:12px;color:#444;letter-spacing:-0.818px;">Ready</span>
<svg class="r" style="left:359px;top:470px" width="16" height="15" viewBox="0 0 16 15">
<rect x="3.6" y="4.6" width="10.4" height="9" fill="#fff" stroke="#777" stroke-width="1"/>
<circle cx="4.2" cy="3.6" r="2.9" fill="#666" stroke="#f1f1f1" stroke-width=".8"/>
<rect x="7.4" y="2.4" width="7.1" height="2.8" fill="#777"/>
<path d="M5.2 8h7.6M5.2 10.4h7.6M7.6 6.4v6M10.4 6.4v6" stroke="#888" stroke-width=".9"/>
</svg>
<div class="r" style="left:658px;top:468px;width:38px;height:21px;background:#c8c8c8;"></div>
<svg class="r" style="left:669px;top:470px" width="16" height="16" viewBox="0 0 16 16"><rect x="1.7" y="1.8" width="12" height="12" fill="#dadada" stroke="#6a6a6a" stroke-width="1.3"/><path d="M1.7 5.8h12M1.7 9.8h12M5.7 1.8v12M9.7 1.8v12" stroke="#6a6a6a" stroke-width="1.3"/></svg>
<svg class="r" style="left:707px;top:470px" width="16" height="16" viewBox="0 0 16 16"><rect x="1.8" y="1.8" width="12.6" height="11.6" fill="#fff" stroke="#666" stroke-width="1.2"/><rect x="4.6" y="4.4" width="6.8" height="6.6" fill="none" stroke="#666" stroke-width="1.1"/><path d="M6 6.4h4M6 7.8h4M6 9.2h4" stroke="#666" stroke-width=".8"/></svg>
<svg class="r" style="left:745px;top:470px" width="16" height="16" viewBox="0 0 16 16"><rect x="1.8" y="1.8" width="12.6" height="11.6" fill="none" stroke="#666" stroke-width="1.2"/><path d="M10.9 1.8v7.1H1.8M5.6 1.8v5.6M8.6 1.8v5.6" fill="none" stroke="#666" stroke-width="1.2"/></svg>
<div class="r" style="left:777px;top:477px;width:6px;height:2px;background:#555;"></div>
<div class="r" style="left:787px;top:477.5px;width:99px;height:1px;background:#a0a0a0;"></div>
<div class="r" style="left:835px;top:472px;width:4px;height:11px;background:#666;"></div>
<div class="r" style="left:891px;top:477px;width:8px;height:2px;background:#555;"></div>
<div class="r" style="left:894px;top:474px;width:2px;height:8px;background:#555;"></div>
<span class="t" style="left:915.20px;top:472.04px;font-size:12px;color:#444;letter-spacing:-1.173px;">100%</span>
<!-- red arrow -->
<svg class="r" style="left:230px;top:205px" width="76" height="30" viewBox="0 0 76 30"><path d="M3.6 14.6L52 9.6V4.6L72.6 14.6 52 25V19.8z" fill="#fb3838"/></svg>
</body></html>
